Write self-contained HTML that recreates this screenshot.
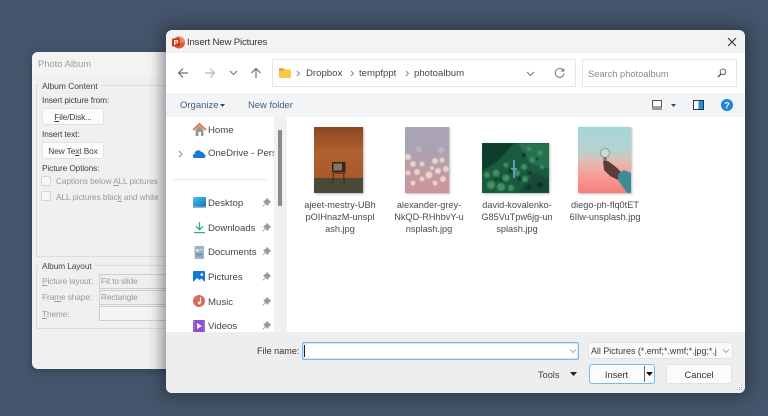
<!DOCTYPE html>
<html><head><meta charset="utf-8"><style>
html,body{margin:0;padding:0;width:768px;height:416px;overflow:hidden;background:#44546a}
body{font-family:"Liberation Sans",sans-serif;position:relative}
#r{position:absolute;left:0;top:0;width:768px;height:416px;overflow:hidden;filter:blur(.3px)}
.t{position:absolute;white-space:nowrap;line-height:12px;font-size:9.3px;color:#3c3c3c}
.b{position:absolute;box-sizing:border-box}
svg{position:absolute;overflow:visible}
.s{font-size:8.3px;letter-spacing:-.1px}
.g{color:#9a9a9a}
.n{font-size:9.6px;color:#444}
.f{position:absolute;width:90px;text-align:center;font-size:9.2px;line-height:12.2px;color:#4a4a4a;top:199px}
u{text-decoration-thickness:1px}
</style></head><body><div id="r">

<!-- Photo Album dialog -->
<div class="b" style="left:32px;top:52px;width:170px;height:317px;background:#f0f0f0;border-radius:6px;box-shadow:0 2px 8px rgba(30,40,55,.45)"></div>
<div class="b" style="left:32px;top:52px;width:170px;height:24px;background:#f3f3f3;border-radius:6px 6px 0 0"></div>
<div class="t" style="left:38px;top:58px;font-size:9.4px;color:#9c9c9c">Photo Album</div>
<div class="b" style="left:36px;top:85px;width:160px;height:172px;border:1px solid #dcdcdc"></div>
<div class="t s" style="left:39px;top:80px;background:#f0f0f0;padding:0 3px;color:#444;font-size:8.6px">Album Content</div>
<div class="t s" style="left:42px;top:94px">Insert picture from:</div>
<div class="b" style="left:42px;top:108px;width:62px;height:17px;background:#fcfcfc;border:1px solid #e2e2e2;border-radius:3px"></div>
<div class="t s" style="left:42px;top:111px;width:62px;text-align:center"><u>F</u>ile/Disk...</div>
<div class="t s" style="left:42px;top:128px">Insert text:</div>
<div class="b" style="left:42px;top:142px;width:62px;height:17px;background:#fcfcfc;border:1px solid #e2e2e2;border-radius:3px"></div>
<div class="t s" style="left:42px;top:145px;width:62px;text-align:center">New Te<u>x</u>t Box</div>
<div class="t s" style="left:42px;top:162px">Picture Options:</div>
<div class="b" style="left:41px;top:176px;width:10px;height:10px;background:#f6f6f6;border:1px solid #d6d6d6;border-radius:2px"></div>
<div class="t g s" style="left:56px;top:175px">Captions below <u>A</u>LL pictures</div>
<div class="b" style="left:41px;top:191px;width:10px;height:10px;background:#f6f6f6;border:1px solid #d6d6d6;border-radius:2px"></div>
<div class="t g s" style="left:56px;top:191px">ALL pictures blac<u>k</u> and white</div>
<div class="b" style="left:36px;top:265px;width:160px;height:64px;border:1px solid #dcdcdc"></div>
<div class="t s" style="left:39px;top:260px;background:#f0f0f0;padding:0 3px;color:#444">Album Layout</div>
<div class="t g s" style="left:42px;top:275px"><u>P</u>icture layout:</div>
<div class="t g s" style="left:42px;top:291px">Fra<u>m</u>e shape:</div>
<div class="t g s" style="left:42px;top:308px"><u>T</u>heme:</div>
<div class="b" style="left:99px;top:274px;width:90px;height:15px;border:1px solid #cfcfcf;background:#efefef"></div>
<div class="t g s" style="left:101px;top:275px">Fit to slide</div>
<div class="b" style="left:99px;top:290px;width:90px;height:15px;border:1px solid #cfcfcf;background:#efefef"></div>
<div class="t g s" style="left:101px;top:291px">Rectangle</div>
<div class="b" style="left:99px;top:306px;width:90px;height:15px;border:1px solid #cfcfcf;background:#f3f3f3"></div>

<!-- Main dialog -->
<div class="b" style="left:166px;top:30px;width:579px;height:363px;background:#f3f3f3;border-radius:6px;box-shadow:0 0 14px 4px rgba(25,32,45,.48);overflow:hidden">
  <div class="b" style="left:0;top:23px;width:579px;height:40px;background:#fff"></div>
  <div class="b" style="left:0;top:63px;width:579px;height:24px;background:#f3f4f6"></div>
  <div class="b" style="left:0;top:87px;width:579px;height:215px;background:#fff"></div>
  <div class="b" style="left:108px;top:87px;width:13px;height:215px;background:#f1f1f1"></div>
  <div class="b" style="left:112px;top:100px;width:4px;height:76px;background:#8b8b8b"></div>
  <div class="b" style="left:0;top:302px;width:579px;height:61px;background:#eeeeee"></div>
</div>

<!-- title -->
<svg style="left:172px;top:36px" width="13" height="13" viewBox="0 0 13 13"><circle cx="7" cy="6.500" r="6" fill="#e0583a"/><path d="M7 .5a6 6 0 0 1 6 6H7z" fill="#ef8b5f"/><rect x="0" y="2.500" width="8" height="8" rx="1" fill="#c43e1c"/><text x="1.600" y="9" font-family="Liberation Sans" font-size="7.500" font-weight="bold" fill="#fff">P</text></svg>
<div class="t" style="left:187px;top:37px;font-size:9.600px;letter-spacing:-.16px;color:#333">Insert New Pictures</div>
<svg style="left:727px;top:37px" width="10" height="10"><path d="M1 1l8 8M9 1l-8 8" stroke="#333" stroke-width="1.100" fill="none"/></svg>

<!-- nav -->
<svg style="left:177px;top:67px" width="12" height="12"><path d="M11 6H1.500M6 1.500L1.500 6 6 10.500" stroke="#6f6f6f" stroke-width="1.200" fill="none"/></svg>
<svg style="left:204px;top:67px" width="12" height="12"><path d="M1 6h9.500M6 1.500L10.500 6 6 10.500" stroke="#b5b5b5" stroke-width="1.200" fill="none"/></svg>
<svg style="left:229px;top:70px" width="9" height="6"><path d="M1 1l3.500 3.500L8 1" stroke="#777" stroke-width="1.100" fill="none"/></svg>
<svg style="left:250px;top:67px" width="12" height="12"><path d="M6 11V1.500M1.500 6L6 1.500 10.500 6" stroke="#6f6f6f" stroke-width="1.200" fill="none"/></svg>

<div class="b" style="left:272px;top:59px;width:304px;height:28px;border:1px solid #e6e6e6;background:#fff"></div>
<svg style="left:279px;top:68px" width="12" height="10"><path d="M0 1a1 1 0 0 1 1-1h3l1.500 1.500H11a1 1 0 0 1 1 1V9a1 1 0 0 1-1 1H1a1 1 0 0 1-1-1z" fill="#f7c948"/><path d="M0 3h5.500L7 1.500 5.500 1.500 4 0H1a1 1 0 0 0-1 1z" fill="#e8ab2c"/></svg>
<svg style="left:296px;top:70px" width="5" height="7"><path d="M1 1l2.500 2.500L1 6" stroke="#888" fill="none"/></svg>
<div class="t n" style="left:306px;top:68px">Dropbox</div>
<svg style="left:350px;top:70px" width="5" height="7"><path d="M1 1l2.500 2.500L1 6" stroke="#888" fill="none"/></svg>
<div class="t n" style="left:359px;top:68px">tempfppt</div>
<svg style="left:405px;top:70px" width="5" height="7"><path d="M1 1l2.500 2.500L1 6" stroke="#888" fill="none"/></svg>
<div class="t n" style="left:414px;top:68px">photoalbum</div>
<svg style="left:526px;top:71px" width="9" height="6"><path d="M1 1l3.500 3.500L8 1" stroke="#777" fill="none"/></svg>
<svg style="left:554px;top:68px" width="11" height="11"><path d="M9.500 2.800A4.400 4.400 0 1 0 10 5.500M9.800.5v2.600H7.200" stroke="#777" stroke-width="1" fill="none"/></svg>

<div class="b" style="left:582px;top:59px;width:155px;height:28px;border:1px solid #e6e6e6;background:#fff"></div>
<div class="t" style="left:588px;top:68px;color:#8a8a8a;font-size:9.300px">Search photoalbum</div>
<svg style="left:717px;top:68px" width="10" height="10"><circle cx="6" cy="3.800" r="2.800" stroke="#666" fill="none"/><path d="M4 6L1 9" stroke="#555" stroke-width="1.400"/></svg>

<!-- toolbar -->
<div class="t" style="left:180px;top:100px;font-size:9.500px;color:#3f5f82">Organize</div>
<svg style="left:220px;top:104px" width="5" height="3"><path d="M0 0h5L2.500 3z" fill="#2f4a6a"/></svg>
<div class="t" style="left:248px;top:100px;font-size:9.500px;letter-spacing:-.05px;color:#3f5f82">New folder</div>
<svg style="left:652px;top:100px" width="11" height="10"><rect x=".5" y=".5" width="9" height="6.500" fill="#fff" stroke="#555"/><rect x="0" y="7" width="10" height="3" fill="#9a9a9a"/></svg>
<svg style="left:671px;top:104px" width="5" height="3"><path d="M0 0h5L2.500 3z" fill="#2f4a6a"/></svg>
<svg style="left:693px;top:100px" width="11" height="10"><rect x=".5" y=".5" width="10" height="9" fill="#fff" stroke="#333"/><rect x="5.500" y="1" width="4.500" height="8" fill="#1f8fe0"/></svg>
<svg style="left:721px;top:99px" width="12" height="12"><circle cx="6" cy="6" r="6" fill="#1b84dc"/><text x="6" y="9.300" text-anchor="middle" font-family="Liberation Sans" font-size="9" font-weight="bold" fill="#fff">?</text></svg>

<!-- nav pane -->
<div class="b" style="left:166px;top:117px;width:108px;height:215px;overflow:hidden">
<svg style="left:27px;top:6px" width="13" height="13"><path d="M2.500 6.500V13h3V9h2.500v4h2.500V6.500L6.500 2.500z" fill="#9a9a9a"/><path d="M0 7l6.500-6L13 7" stroke="#e2733d" stroke-width="1.800" fill="none"/></svg>
<div class="t n" style="left:42px;top:8px">Home</div>
<svg style="left:12px;top:33px" width="5" height="8"><path d="M1 1l3 3-3 3" stroke="#888" fill="none"/></svg>
<svg style="left:27px;top:32px" width="13" height="9"><path d="M2 9a2 2 0 0 1-.3-4A3.500 3.500 0 0 1 8.200 3a2.800 2.800 0 0 1 2.800 2.100A2 2 0 0 1 11 9z" fill="#1578d2"/></svg>
<div class="t n" style="left:42px;top:31px">OneDrive - Perso</div>
<div class="b" style="left:8px;top:62px;width:93px;height:1px;background:#e6e6e6"></div>
<svg style="left:27px;top:80px" width="13" height="11"><defs><linearGradient id="d" x1="0" y1="0" x2="1" y2="1"><stop offset="0" stop-color="#46c4e8"/><stop offset="1" stop-color="#1273c4"/></linearGradient></defs><rect width="13" height="9.500" rx="1" fill="url(#d)"/><rect y="9.500" width="13" height="1.300" fill="#8aa2b5"/></svg>
<div class="t n" style="left:42px;top:81px">Desktop</div>
<svg style="left:28px;top:105px" width="11" height="12"><path d="M5.500 0v7M2 4.200l3.500 3.500L9 4.200" stroke="#22b28e" stroke-width="1.300" fill="none"/><rect x="0" y="10" width="11" height="1.200" fill="#22b28e"/></svg>
<div class="t n" style="left:42px;top:106px">Downloads</div>
<svg style="left:28px;top:129px" width="11" height="13"><rect x=".5" y="0" width="9.500" height="13" rx="1" fill="#9fb3c8"/><rect x="2" y="3" width="3" height="2.500" fill="#dbe4ec"/><rect x="6" y="3" width="2.500" height="1" fill="#dbe4ec"/><rect x="2" y="7" width="6.500" height="3.500" fill="#7f98b3"/></svg>
<div class="t n" style="left:42px;top:130px">Documents</div>
<svg style="left:27px;top:154px" width="12" height="12"><rect width="12" height="12" rx="1" fill="#1578d8"/><path d="M0 11l4-4 2.500 2 2-1.500L12 11v1H0z" fill="#fff"/><circle cx="8.800" cy="3.500" r="1.300" fill="#fff"/></svg>
<div class="t n" style="left:42px;top:155px">Pictures</div>
<svg style="left:27px;top:178px" width="12" height="12"><circle cx="6" cy="6" r="6" fill="#d96c5c"/><path d="M7.500 2.500V7.800" stroke="#fff" stroke-width="1"/><circle cx="6.200" cy="8" r="1.400" fill="#fff"/></svg>
<div class="t n" style="left:42px;top:180px">Music</div>
<svg style="left:27px;top:203px" width="12" height="12"><rect width="12" height="12" rx="1" fill="#8a4fd6"/><path d="M4 3l5 3-5 3z" fill="#fff"/><path d="M1 1v10M11 1v10" stroke="#c9b0ee" stroke-dasharray="1.200 1.200"/></svg>
<div class="t n" style="left:42px;top:204px">Videos</div>
<!-- pins -->
<svg style="left:96px;top:81px" width="9" height="9"><path d="M5 .5L8.500 4 7 4.800 5.500 7.300 1.800 3.500 4.300 2zM3.500 5.500L.8 8.300" fill="#999" stroke="#999" stroke-width=".8"/></svg>
<svg style="left:96px;top:106px" width="9" height="9"><path d="M5 .5L8.500 4 7 4.800 5.500 7.300 1.800 3.500 4.300 2zM3.500 5.500L.8 8.300" fill="#999" stroke="#999" stroke-width=".8"/></svg>
<svg style="left:96px;top:130px" width="9" height="9"><path d="M5 .5L8.500 4 7 4.800 5.500 7.300 1.800 3.500 4.300 2zM3.500 5.500L.8 8.300" fill="#999" stroke="#999" stroke-width=".8"/></svg>
<svg style="left:96px;top:155px" width="9" height="9"><path d="M5 .5L8.500 4 7 4.800 5.500 7.300 1.800 3.500 4.300 2zM3.500 5.500L.8 8.300" fill="#999" stroke="#999" stroke-width=".8"/></svg>
<svg style="left:96px;top:180px" width="9" height="9"><path d="M5 .5L8.500 4 7 4.800 5.500 7.300 1.800 3.500 4.300 2zM3.500 5.500L.8 8.300" fill="#999" stroke="#999" stroke-width=".8"/></svg>
<svg style="left:96px;top:204px" width="9" height="9"><path d="M5 .5L8.500 4 7 4.800 5.500 7.300 1.800 3.500 4.300 2zM3.500 5.500L.8 8.300" fill="#999" stroke="#999" stroke-width=".8"/></svg>
</div>

<!-- thumbs -->
<svg style="left:314px;top:127px;filter:drop-shadow(1.500px 1.500px 1px rgba(0,0,0,.28))" width="49" height="66" viewBox="0 0 49 66"><defs><linearGradient id="w" x1="0" y1="0" x2="0" y2="1"><stop offset="0" stop-color="#8a4724"/><stop offset=".5" stop-color="#b1622f"/><stop offset="1" stop-color="#a9582c"/></linearGradient></defs><rect width="49" height="51" fill="url(#w)"/><rect y="51" width="49" height="15" fill="#4a4a3a"/><rect x="18" y="35" width="13.500" height="10" rx="1" fill="#35261c"/><rect x="19.500" y="36.500" width="8.500" height="7" fill="#84746a"/><rect x="18" y="45" width="13.500" height="2" fill="#7a3a1c"/><path d="M19.500 47l-1 11M29.500 47l1 11" stroke="#5a2c16" stroke-width="1.200"/></svg>

<svg style="left:405px;top:127px;filter:drop-shadow(1.500px 1.500px 1px rgba(0,0,0,.28))" width="44" height="66" viewBox="0 0 44 66"><defs><linearGradient id="p" x1="0" y1="0" x2="0" y2="1"><stop offset="0" stop-color="#a9a6b6"/><stop offset=".4" stop-color="#ada2b0"/><stop offset="1" stop-color="#cf9399"/></linearGradient><filter id="bk"><feGaussianBlur stdDeviation=".6"/></filter></defs><rect width="44" height="66" fill="url(#p)"/><g filter="url(#bk)" fill="#fbe6da" fill-opacity=".75"><circle cx="14" cy="22" r="3" fill="#c3b8c6"/><circle cx="36" cy="23" r="3" fill="#c9bcc8"/><circle cx="3" cy="30" r="3"/><circle cx="8" cy="37" r="3"/><circle cx="3" cy="46" r="2.500"/><circle cx="12" cy="45" r="3"/><circle cx="17" cy="37" r="2.500"/><circle cx="24" cy="48" r="3.500"/><circle cx="30" cy="34" r="3"/><circle cx="37" cy="33" r="2.500"/><circle cx="33" cy="44" r="3"/><circle cx="41" cy="42" r="3"/><circle cx="27" cy="41" r="2"/><circle cx="17" cy="52" r="2.500"/><circle cx="38" cy="52" r="3"/><circle cx="30" cy="56" r="2.500"/><circle cx="8" cy="56" r="2.500"/></g></svg>

<svg style="left:482px;top:143px;filter:drop-shadow(1.500px 1.500px 1px rgba(0,0,0,.28))" width="67" height="50" viewBox="0 0 67 50"><defs><filter id="bt" x="0" y="0" width="100%" height="100%"><feGaussianBlur stdDeviation=".7"/></filter><clipPath id="ct"><rect width="67" height="50"/></clipPath></defs><g clip-path="url(#ct)"><rect width="67" height="50" fill="#1a5a3e"/><g filter="url(#bt)"><path d="M0 0h32L16 18 0 28z" fill="#0f3d2c"/><path d="M36 50L52 30l15 6v14z" fill="#14493a"/><path d="M36 0h31v26L48 20z" fill="#27714f"/><g fill="#3f9163"><circle cx="5" cy="32" r="3"/><circle cx="14" cy="30" r="3.500"/><circle cx="24" cy="35" r="3.500"/><circle cx="9" cy="42" r="4"/><circle cx="19" cy="44" r="4"/><circle cx="29" cy="45" r="3"/><circle cx="35" cy="30" r="3"/><circle cx="42" cy="24" r="3"/><circle cx="43" cy="36" r="3"/><circle cx="50" cy="17" r="2.500"/><circle cx="58" cy="10" r="2.500"/><circle cx="47" cy="6" r="2"/><circle cx="60" cy="24" r="2"/><circle cx="24" cy="22" r="2.500"/></g><g fill="#0d3426"><circle cx="19" cy="37" r="1.500"/><circle cx="14" cy="36" r="1.500"/><circle cx="38" cy="36" r="2"/><circle cx="48" cy="30" r="2"/><circle cx="55" cy="16" r="1.500"/><circle cx="42" cy="12" r="2"/><circle cx="29" cy="28" r="2"/><circle cx="58" cy="42" r="3"/><circle cx="47" cy="44" r="2.500"/></g></g><path d="M32 17v18M29 26h6" stroke="#5ba4c8" stroke-width="1.800"/></g></svg>

<svg style="left:578px;top:127px;filter:drop-shadow(1.500px 1.500px 1px rgba(0,0,0,.28))" width="53" height="66" viewBox="0 0 53 66"><defs><linearGradient id="s" x1="0" y1="0" x2="0" y2="1"><stop offset="0" stop-color="#a4d6d8"/><stop offset=".35" stop-color="#b5d2d0"/><stop offset=".55" stop-color="#e6b8b0"/><stop offset=".75" stop-color="#f79a95"/><stop offset="1" stop-color="#f67e7c"/></linearGradient></defs><rect width="53" height="66" fill="url(#s)"/><circle cx="27" cy="26" r="4.500" fill="#cfe0df" fill-opacity=".7" stroke="#7d9093" stroke-width=".8"/><rect x="25.500" y="30" width="3" height="4" fill="#7d6a62"/><path d="M25 34h5l4 3 5 4 5 5-4 7-8-4-6-6z" fill="#5d3b39"/><path d="M40 47l6-4 7 3v20h-4l-9-13z" fill="#3f8a98"/></svg>

<div class="f" style="left:295px">ajeet-mestry-UBh<br>pOIHnazM-unspl<br>ash.jpg</div>
<div class="f" style="left:384px">alexander-grey-<br>NkQD-RHhbvY-u<br>nsplash.jpg</div>
<div class="f" style="left:472px">david-kovalenko-<br>G85VuTpw6jg-un<br>splash.jpg</div>
<div class="f" style="left:560px">diego-ph-flq0tET<br>6Ilw-unsplash.jpg</div>

<!-- bottom -->
<div class="t" style="left:257px;top:345px;font-size:9.100px;color:#333">File name:</div>
<div class="b" style="left:302px;top:342px;width:277px;height:18px;background:#fff;border:1px solid #7db8ea;box-shadow:inset 0 0 0 .5px #a9d0f2;border-radius:2px"></div>
<div class="b" style="left:304px;top:345px;width:1px;height:12px;background:#222"></div>
<svg style="left:569px;top:349px" width="8" height="5"><path d="M1 .5l3 3 3-3" stroke="#aaa" fill="none"/></svg>
<div class="b" style="left:588px;top:342px;width:145px;height:17px;background:#fafafa;border:1px solid #e2e2e2;border-radius:2px"></div>
<div class="t" style="left:591px;top:345px;font-size:8.900px;color:#3c3c3c;width:130px;overflow:hidden">All Pictures (*.emf;*.wmf;*.jpg;*.j</div>
<svg style="left:722px;top:349px" width="8" height="5"><path d="M1 .5l3 3 3-3" stroke="#aaa" fill="none"/></svg>
<div class="t" style="left:538px;top:369px;font-size:9.200px;color:#444">Tools</div>
<svg style="left:570px;top:372px" width="7" height="4"><path d="M0 0h7L3.500 4z" fill="#222"/></svg>
<div class="b" style="left:589px;top:364px;width:66px;height:20px;background:#fbfbfb;border:1px solid #7db8ea;border-radius:3px"></div>
<div class="t" style="left:589px;top:369px;width:55px;text-align:center;font-size:9.300px;color:#333">Insert</div>
<div class="b" style="left:644px;top:366px;width:1px;height:16px;background:#666"></div>
<svg style="left:646px;top:372px" width="7" height="4"><path d="M0 0h7L3.500 4z" fill="#111"/></svg>
<div class="b" style="left:666px;top:364px;width:66px;height:20px;background:#fbfbfb;border:1px solid #e2e2e2;border-radius:3px"></div>
<div class="t" style="left:666px;top:369px;width:66px;text-align:center;font-size:9.300px;color:#333">Cancel</div>
<svg style="left:737px;top:385px" width="6" height="6"><g fill="#aaa"><rect x="4" y="0" width="1" height="1"/><rect x="2" y="2" width="1" height="1"/><rect x="4" y="2" width="1" height="1"/><rect x="0" y="4" width="1" height="1"/><rect x="2" y="4" width="1" height="1"/><rect x="4" y="4" width="1" height="1"/></g></svg>
</div></body></html>
